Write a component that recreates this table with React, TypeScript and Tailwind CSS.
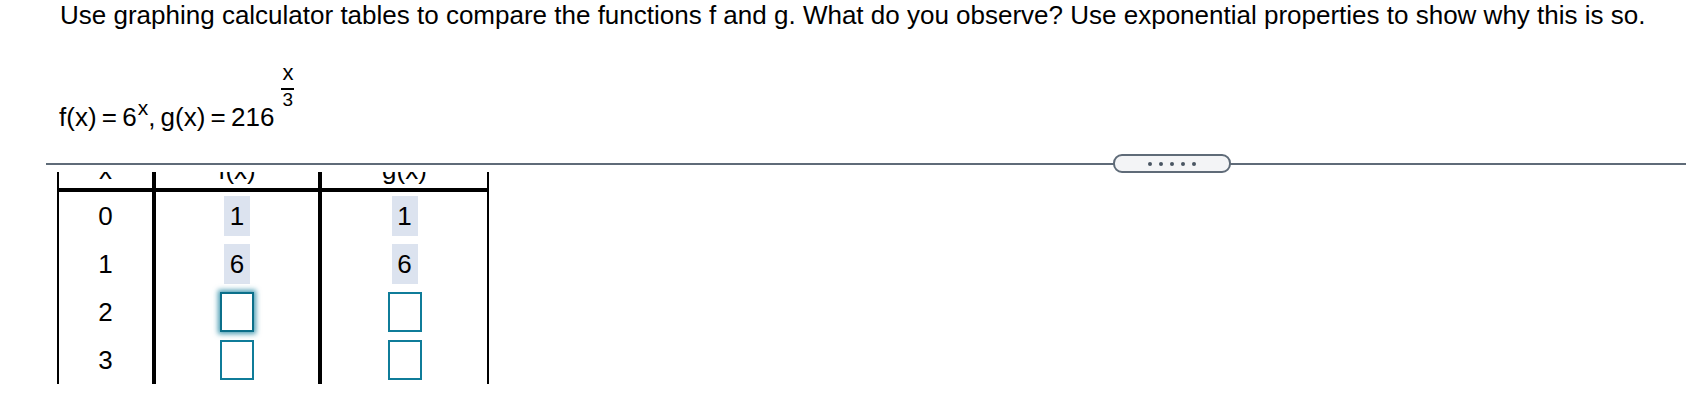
import React from "react";

const rows = [
  { x: "0", f: "1", g: "1" },
  { x: "1", f: "6", g: "6" },
  { x: "2", f: null, g: null },
  { x: "3", f: null, g: null },
];

function Given({ v }: { v: string }) {
  return (
    <span className="w-[26px] h-[40px] bg-[#dce3ef] flex items-center justify-center text-[26px] leading-[30px]">
      {v}
    </span>
  );
}

function Blank({ focused }: { focused?: boolean }) {
  return (
    <span
      className={
        focused
          ? "w-[34px] h-[40px] border-2 border-[#0b6f8a] bg-white shadow-[0_0_5px_2px_rgba(15,124,153,0.75)]"
          : "w-[34px] h-[40px] border-2 border-[#0f7c99] bg-white"
      }
    />
  );
}

function HeaderCell({ label }: { label: string }) {
  return (
    <div className="h-[20px] overflow-hidden border-b-4 border-black">
      <div className="-mt-[17px] text-center text-[26px] leading-[30px]">{label}</div>
    </div>
  );
}

export default function App() {
  return (
    <div className="w-[1686px] h-[404px] overflow-hidden bg-white text-black font-['Liberation_Sans',Arial,sans-serif]">
      <p className="pl-[60px] text-[26px] leading-[30px] whitespace-nowrap">
        Use graphing calculator tables to compare the functions f and g. What do you observe? Use exponential properties to show why this is so.
      </p>

      {/* formula */}
      <div className="mt-[30px] h-[73px] pl-[59px] flex items-start text-[26px] leading-[30px] whitespace-pre [word-spacing:-2px]">
        <span className="mt-[42px]">f(x) = 6</span>
        <span className="mt-[37px] ml-[1px] text-[21px] leading-[21px]">x</span>
        <span className="mt-[42px]">, g(x) = 216</span>
        <div className="ml-[7px] flex flex-col items-center">
          <span className="mt-[2px] text-[22px] leading-[22px]">x</span>
          <span className="mt-[4px] w-[13px] h-[2px] bg-black" />
          <span className="text-[19px] leading-[19px]">3</span>
        </div>
      </div>

      {/* divider with expander */}
      <div className="relative mt-[30px] ml-[46px] h-[2px] bg-[#5f6b78]">
        <div className="absolute left-[1067px] -top-[9px] w-[118px] h-[19px] rounded-[9px] border-2 border-[#5f6b78] bg-[#f3f4f6] flex items-center justify-center gap-[7px]">
          <span className="w-[4px] h-[4px] rounded-full bg-[#4a5563]" />
          <span className="w-[4px] h-[4px] rounded-full bg-[#4a5563]" />
          <span className="w-[4px] h-[4px] rounded-full bg-[#4a5563]" />
          <span className="w-[4px] h-[4px] rounded-full bg-[#4a5563]" />
          <span className="w-[4px] h-[4px] rounded-full bg-[#4a5563]" />
        </div>
      </div>

      {/* table */}
      <div className="ml-[57px] mt-[7px] flex w-max border-x-2 border-black">
        <div className="w-[97px] border-r-4 border-black">
          <HeaderCell label="x" />
          {rows.map((r) => (
            <div key={r.x} className="h-[48px] flex items-center justify-center text-[26px] leading-[30px]">
              {r.x}
            </div>
          ))}
        </div>
        <div className="w-[166px] border-r-4 border-black">
          <HeaderCell label="f(x)" />
          {rows.map((r, i) => (
            <div key={r.x} className="h-[48px] flex items-center justify-center">
              {r.f ? <Given v={r.f} /> : <Blank focused={i === 2} />}
            </div>
          ))}
        </div>
        <div className="w-[165px]">
          <HeaderCell label="g(x)" />
          {rows.map((r) => (
            <div key={r.x} className="h-[48px] flex items-center justify-center">
              {r.g ? <Given v={r.g} /> : <Blank />}
            </div>
          ))}
        </div>
      </div>
    </div>
  );
}
